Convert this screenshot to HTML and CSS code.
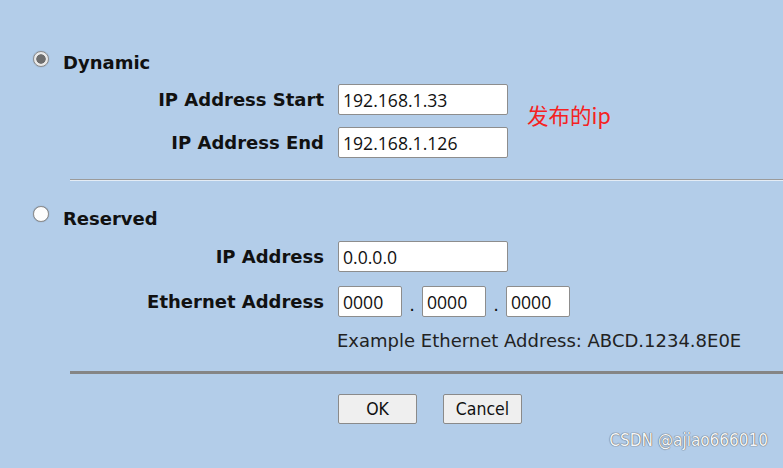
FILE: index.html
```html
<!DOCTYPE html>
<html>
<head>
<meta charset="utf-8">
<link rel="stylesheet" href="styles.css">
</head>
<body>
<div class="page">
  <label class="radio-row">
    <input type="radio" name="mode" class="radio" checked>
    <span class="radio-text">Dynamic</span>
  </label>
  <div class="group">
    <div class="rows">
      <div class="field-row first">
        <span class="label">IP Address Start</span>
        <input class="box wide" type="text" value="192.168.1.33">
      </div>
      <div class="field-row">
        <span class="label">IP Address End</span>
        <input class="box wide" type="text" value="192.168.1.126">
      </div>
    </div>
    <div class="note">发布的ip</div>
  </div>
  <div class="rule light"></div>
  <label class="radio-row second">
    <input type="radio" name="mode" class="radio">
    <span class="radio-text">Reserved</span>
  </label>
  <div class="field-row ip">
    <span class="label">IP Address</span>
    <input class="box wide" type="text" value="0.0.0.0">
  </div>
  <div class="field-row eth">
    <span class="label">Ethernet Address</span>
    <input class="box short" type="text" value="0000">
    <span class="dot">.</span>
    <input class="box short" type="text" value="0000">
    <span class="dot">.</span>
    <input class="box short" type="text" value="0000">
  </div>
  <div class="example">Example Ethernet Address: ABCD.1234.8E0E</div>
  <div class="rule dark"></div>
  <div class="buttons">
    <button class="btn" type="button">OK</button>
    <button class="btn" type="button">Cancel</button>
  </div>
  <div class="watermark">CSDN @ajiao666010</div>
</div>
</body>
</html>
```

FILE: styles.css
```css
html, body {
  margin: 0;
  padding: 0;
}
body {
  background: #b3cde9;
  font-family: "DejaVu Sans", Verdana, sans-serif;
  font-size: 18px;
  color: #111;
  width: 783px;
  height: 468px;
  overflow: hidden;
}
.page {
  position: relative;
  padding-top: 48px;
  height: 420px;
}
.radio-row {
  display: flex;
  align-items: center;
  height: 24px;
  padding-left: 33px;
  gap: 14px;
  font-weight: bold;
}
.radio-text {
  position: relative;
  top: 2px;
}
.radio-row.second {
  margin-top: 22px;
}
.radio-row.second .radio-text {
  top: 3px;
}
.radio {
  appearance: none;
  -webkit-appearance: none;
  margin: 0;
  width: 16px;
  height: 16px;
  border-radius: 50%;
  border: 1px solid #8c8c8c;
  background: #fdfdfd;
  box-shadow: 0 0 1px rgba(0,0,0,0.35);
  box-sizing: border-box;
  position: relative;
  top: -1px;
}
.radio:checked {
  background: radial-gradient(circle, #6e6e6e 0, #6e6e6e 4.4px, #e9e9e9 5px);
}
.group {
  display: flex;
  align-items: center;
}
.note {
  margin-left: 19px;
  margin-bottom: 2px;
  color: #f52222;
  font-family: "Noto Sans CJK SC", "Noto Sans", sans-serif;
  font-size: 21.5px;
}
.field-row {
  display: flex;
  align-items: center;
  height: 31px;
  margin-top: 12px;
}
.field-row.ip {
  margin-top: 14px;
}
.field-row.eth {
  margin-top: 14px;
}
.label {
  width: 324px;
  margin-right: 14px;
  text-align: right;
  font-weight: bold;
  white-space: nowrap;
}
.box {
  box-sizing: border-box;
  height: 31px;
  margin: 0;
  border: 1px solid #8d8d8d;
  border-radius: 2px;
  background: #fff;
  padding: 0 0 0 4px;
  font-family: "Open Sans", "Noto Sans", sans-serif;
  font-size: 17.6px;
  color: #111;
  outline: none;
}
.wide {
  width: 170px;
}
.short {
  width: 64px;
}
.dot {
  width: 20px;
  text-align: center;
  padding-top: 6px;
}
.example {
  margin-top: 13px;
  margin-left: 337px;
  line-height: 22px;
  color: #222;
}
.rule {
  margin-left: 70px;
}
.rule.light {
  margin-top: 21px;
  height: 1px;
  background: #9b9b9b;
  border-bottom: 1px solid #e4ecf5;
}
.rule.dark {
  margin-top: 19px;
  height: 3px;
  background: #858585;
}
.buttons {
  display: flex;
  gap: 26px;
  margin-top: 20px;
  margin-left: 338px;
}
.btn {
  box-sizing: border-box;
  width: 79px;
  height: 30px;
  margin: 0;
  padding: 0;
  border: 1px solid #8a8a8a;
  border-radius: 2px;
  background: #efefef;
  font-family: "DejaVu Sans Condensed", "DejaVu Sans", sans-serif;
  font-stretch: condensed;
  font-size: 17.5px;
  color: #111;
}
.watermark {
  position: absolute;
  right: 15px;
  top: 430px;
  font-family: "DejaVu Sans Condensed", "DejaVu Sans", sans-serif;
  font-stretch: condensed;
  font-size: 17px;
  color: #f4f6f9;
  text-shadow: 0 0 1px #555, 0 0 1px #555;
}
```
